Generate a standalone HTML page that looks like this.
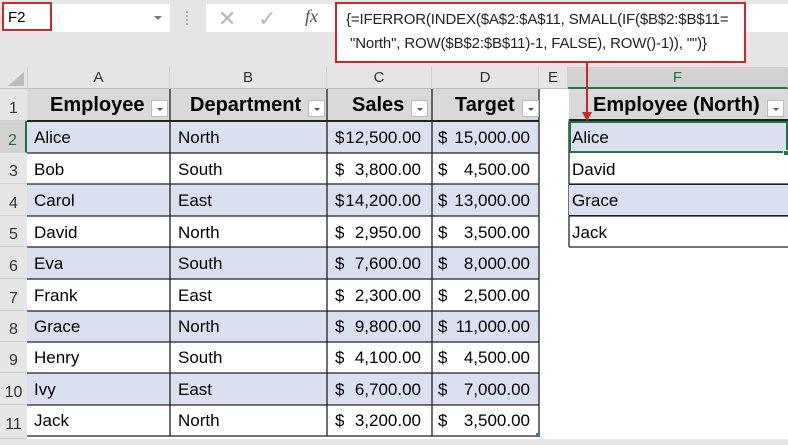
<!DOCTYPE html>
<html><head><style>
*{margin:0;padding:0;box-sizing:border-box}
body{width:788px;height:439px;background:#e6e6e6;position:relative;overflow:hidden;font-family:"Liberation Sans",Arial,sans-serif;color:#000}
.a{position:absolute}
.c{position:absolute;font-size:17px;line-height:31px;white-space:pre;overflow:hidden}
.n{position:absolute;font-size:17px;line-height:31px;white-space:pre;text-align:right}
.rh{position:absolute;left:0;width:27px;text-align:center;font-size:16px;color:#333;background:#e6e6e6;border-bottom:1px solid #cfcfcf}
.ch{position:absolute;top:67px;height:22px;text-align:center;font-size:15px;line-height:22px;color:#333;border-right:1px solid #cfcfcf}
.dd{position:absolute;width:17px;height:17px;background:#fff;border:1px solid #bbb}
.dd:after{content:"";position:absolute;left:5px;top:7px;border-left:3px solid transparent;border-right:3px solid transparent;border-top:3px solid #555}
</style></head><body>
<div class="a" style="left:2px;top:4px;width:168px;height:28px;background:#fff"></div>
<div class="a" style="left:2px;top:2px;width:50px;height:29px;border:2px solid #d0262b"></div>
<div class="a" style="left:8px;top:9px;font-size:15px">F2</div>
<div class="a" style="left:154px;top:16px;border-left:4px solid transparent;border-right:4px solid transparent;border-top:4px solid #777"></div>
<div class="a" style="left:186px;top:11px;width:2px;height:14px;border-left:2px dotted #aaa"></div>
<div class="a" style="left:206px;top:4px;width:582px;height:28px;background:#fff"></div>
<div class="a" style="left:218px;top:6px;font-size:22px;color:#b8b8b8">✕</div>
<div class="a" style="left:258px;top:6px;font-size:22px;color:#b8b8b8">✓</div>
<div class="a" style="left:305px;top:6px;font-size:18px;font-style:italic;font-family:'Liberation Serif',serif;color:#555">fx</div>
<div class="a" style="left:335px;top:2px;width:411px;height:61px;background:#fff;border:2px solid #d0262b"></div>
<div class="a" style="left:346px;top:8px;font-size:15px;line-height:24px;color:#222;white-space:pre;letter-spacing:-0.15px">{=IFERROR(INDEX($A$2:$A$11, SMALL(IF($B$2:$B$11=
 "North", ROW($B$2:$B$11)-1, FALSE), ROW()-1)), "")}</div>
<div class="a" style="left:0;top:67px;width:788px;height:372px;background:#fff"></div>
<div class="a" style="left:0;top:67px;width:788px;height:22px;background:#e6e6e6;border-bottom:1px solid #bdbdbd"></div>
<div class="a" style="left:8px;top:72px;border-left:16px solid transparent;border-bottom:14px solid #bcbcbc"></div>
<div class="ch" style="left:27px;width:143px;border-left:1px solid #cfcfcf">A</div>
<div class="ch" style="left:170px;width:157px">B</div>
<div class="ch" style="left:327px;width:105px">C</div>
<div class="ch" style="left:432px;width:107px">D</div>
<div class="ch" style="left:539px;width:29px">E</div>
<div class="ch" style="left:568px;width:220px;background:#d2d2d2;color:#217346;border-bottom:2px solid #217346">F</div>
<div class="rh" style="top:89px;height:32px;line-height:40px">1</div>
<div class="rh" style="top:121px;height:32px;line-height:40px;color:#217346;background:#d2d2d2;border-right:2px solid #217346">2</div>
<div class="rh" style="top:153px;height:31px;line-height:38px">3</div>
<div class="rh" style="top:184px;height:32px;line-height:40px">4</div>
<div class="rh" style="top:216px;height:31px;line-height:38px">5</div>
<div class="rh" style="top:247px;height:32px;line-height:40px">6</div>
<div class="rh" style="top:279px;height:32px;line-height:40px">7</div>
<div class="rh" style="top:311px;height:31px;line-height:38px">8</div>
<div class="rh" style="top:342px;height:31px;line-height:38px">9</div>
<div class="rh" style="top:373px;height:32px;line-height:40px">10</div>
<div class="rh" style="top:405px;height:34px;line-height:40px">11</div>
<div class="a" style="left:27px;top:89px;width:512px;height:32px;background:#d9d9d9"></div>
<div class="a" style="left:27px;top:121px;width:512px;height:32px;background:#dae0f0"></div>
<div class="a" style="left:27px;top:184px;width:512px;height:32px;background:#dae0f0"></div>
<div class="a" style="left:27px;top:247px;width:512px;height:32px;background:#dae0f0"></div>
<div class="a" style="left:27px;top:311px;width:512px;height:31px;background:#dae0f0"></div>
<div class="a" style="left:27px;top:373px;width:512px;height:32px;background:#dae0f0"></div>
<svg class="a" style="left:0;top:0" width="788" height="439">
<g stroke="#222" stroke-width="1.3" fill="none">
<line x1="27" y1="121" x2="539" y2="121" stroke-width="2"/>
<line x1="27" y1="153" x2="539" y2="153"/><line x1="27" y1="184" x2="539" y2="184"/>
<line x1="27" y1="216" x2="539" y2="216"/><line x1="27" y1="247" x2="539" y2="247"/>
<line x1="27" y1="279" x2="539" y2="279"/><line x1="27" y1="311" x2="539" y2="311"/>
<line x1="27" y1="342" x2="539" y2="342"/><line x1="27" y1="373" x2="539" y2="373"/>
<line x1="27" y1="405" x2="539" y2="405"/><line x1="27" y1="436" x2="539" y2="436"/>
<line x1="170" y1="89" x2="170" y2="436"/><line x1="327" y1="89" x2="327" y2="436"/>
<line x1="432" y1="89" x2="432" y2="436"/><line x1="539" y1="89" x2="539" y2="436"/>
<line x1="569" y1="184" x2="788" y2="184"/><line x1="569" y1="216" x2="788" y2="216"/>
<line x1="569" y1="247" x2="788" y2="247"/>
<line x1="569" y1="121" x2="569" y2="247"/>
</g>
<rect x="536" y="433" width="4" height="4" fill="#4a6fb0"/>
</svg>
<div class="a" style="left:569px;top:89px;width:219px;height:32px;background:#d9d9d9;border-bottom:2px solid #222"></div>
<div class="a" style="left:569px;top:121px;width:219px;height:32px;background:#dae0f0;border:2px solid #217346"></div>
<div class="a" style="left:569px;top:184px;width:219px;height:32px;background:#dae0f0;border-top:1px solid #222;border-bottom:1px solid #222"></div>
<div class="a" style="left:783px;top:150px;width:6px;height:6px;background:#217346;border:1px solid #fff"></div>
<div class="a" style="left:586px;top:63px;width:2px;height:50px;background:#d0262b"></div>
<div class="a" style="left:582px;top:112px;border-left:5px solid transparent;border-right:5px solid transparent;border-top:9px solid #d0262b"></div>
<div class="c" style="left:50px;top:90px;font-size:20px;font-weight:bold">Employee</div>
<div class="dd" style="left:151px;top:100px"></div>
<div class="c" style="left:190px;top:90px;font-size:20px;font-weight:bold">Department</div>
<div class="dd" style="left:308px;top:100px"></div>
<div class="c" style="left:352px;top:90px;font-size:20px;font-weight:bold">Sales</div>
<div class="dd" style="left:411px;top:100px"></div>
<div class="c" style="left:455px;top:90px;font-size:20px;font-weight:bold">Target</div>
<div class="dd" style="left:522px;top:100px"></div>
<div class="c" style="left:593px;top:90px;font-size:20px;font-weight:bold">Employee (North)</div>
<div class="dd" style="left:767px;top:100px"></div>

<div class="c" style="left:34px;top:122px">Alice</div><div class="c" style="left:178px;top:122px">North</div>
<div class="c" style="left:34px;top:154px">Bob</div><div class="c" style="left:178px;top:154px">South</div>
<div class="c" style="left:34px;top:185px">Carol</div><div class="c" style="left:178px;top:185px">East</div>
<div class="c" style="left:34px;top:217px">David</div><div class="c" style="left:178px;top:217px">North</div>
<div class="c" style="left:34px;top:248px">Eva</div><div class="c" style="left:178px;top:248px">South</div>
<div class="c" style="left:34px;top:280px">Frank</div><div class="c" style="left:178px;top:280px">East</div>
<div class="c" style="left:34px;top:311px">Grace</div><div class="c" style="left:178px;top:311px">North</div>
<div class="c" style="left:34px;top:342px">Henry</div><div class="c" style="left:178px;top:342px">South</div>
<div class="c" style="left:34px;top:374px">Ivy</div><div class="c" style="left:178px;top:374px">East</div>
<div class="c" style="left:34px;top:405px">Jack</div><div class="c" style="left:178px;top:405px">North</div>

<!-- C column: $ at 335, numbers right at 421 -->
<div class="c" style="left:335px;top:122px">$</div><div class="n" style="right:367px;top:122px">12,500.00</div>
<div class="c" style="left:335px;top:154px">$</div><div class="n" style="right:367px;top:154px">3,800.00</div>
<div class="c" style="left:335px;top:185px">$</div><div class="n" style="right:367px;top:185px">14,200.00</div>
<div class="c" style="left:335px;top:217px">$</div><div class="n" style="right:367px;top:217px">2,950.00</div>
<div class="c" style="left:335px;top:248px">$</div><div class="n" style="right:367px;top:248px">7,600.00</div>
<div class="c" style="left:335px;top:280px">$</div><div class="n" style="right:367px;top:280px">2,300.00</div>
<div class="c" style="left:335px;top:311px">$</div><div class="n" style="right:367px;top:311px">9,800.00</div>
<div class="c" style="left:335px;top:342px">$</div><div class="n" style="right:367px;top:342px">4,100.00</div>
<div class="c" style="left:335px;top:374px">$</div><div class="n" style="right:367px;top:374px">6,700.00</div>
<div class="c" style="left:335px;top:405px">$</div><div class="n" style="right:367px;top:405px">3,200.00</div>
<!-- D column -->
<div class="c" style="left:438px;top:122px">$</div><div class="n" style="right:258px;top:122px">15,000.00</div>
<div class="c" style="left:438px;top:154px">$</div><div class="n" style="right:258px;top:154px">4,500.00</div>
<div class="c" style="left:438px;top:185px">$</div><div class="n" style="right:258px;top:185px">13,000.00</div>
<div class="c" style="left:438px;top:217px">$</div><div class="n" style="right:258px;top:217px">3,500.00</div>
<div class="c" style="left:438px;top:248px">$</div><div class="n" style="right:258px;top:248px">8,000.00</div>
<div class="c" style="left:438px;top:280px">$</div><div class="n" style="right:258px;top:280px">2,500.00</div>
<div class="c" style="left:438px;top:311px">$</div><div class="n" style="right:258px;top:311px">11,000.00</div>
<div class="c" style="left:438px;top:342px">$</div><div class="n" style="right:258px;top:342px">4,500.00</div>
<div class="c" style="left:438px;top:374px">$</div><div class="n" style="right:258px;top:374px">7,000.00</div>
<div class="c" style="left:438px;top:405px">$</div><div class="n" style="right:258px;top:405px">3,500.00</div>

<div class="c" style="left:572px;top:122px">Alice</div>
<div class="c" style="left:572px;top:154px">David</div>
<div class="c" style="left:572px;top:185px">Grace</div>
<div class="c" style="left:572px;top:217px">Jack</div>
</body></html>
